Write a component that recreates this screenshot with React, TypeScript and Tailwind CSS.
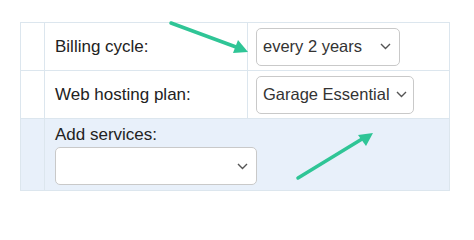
import React from "react";

function Chevron() {
  return (
    <svg width="11" height="7" viewBox="0 0 11 7" className="shrink-0">
      <path d="M1 1l4.5 4.5L10 1" fill="none" stroke="#555" strokeWidth="1.4" />
    </svg>
  );
}

function FakeSelect({ value, className }: { value: string; className: string }) {
  return (
    <div
      className={`flex items-center justify-between h-[38px] bg-white border border-[#c9c9c9] rounded-[5px] pl-[6px] pr-[8px] text-[16.5px] text-[#333] ${className}`}
    >
      <span className="whitespace-nowrap">{value}</span>
      <Chevron />
    </div>
  );
}

export default function App() {
  return (
    <div
      className="relative w-[474px] h-[223px] bg-white overflow-hidden"
      style={{ fontFamily: '"Liberation Sans", Arial, sans-serif' }}
    >
      <div className="pt-[22px] pl-[20px]">
        <table className="border-collapse w-[430px] border border-[#dce6ee] text-[17px] text-[#222]">
          <tbody>
            <tr className="h-[48px]">
              <td className="w-[24px] border border-[#dce6ee]"></td>
              <td className="w-[203px] border border-[#dce6ee] pl-[10px]">Billing cycle:</td>
              <td className="border border-[#dce6ee] pl-[8px]">
                <FakeSelect value="every 2 years" className="w-[144px]" />
              </td>
            </tr>
            <tr className="h-[48px]">
              <td className="border border-[#dce6ee]"></td>
              <td className="border border-[#dce6ee] pl-[10px]">Web hosting plan:</td>
              <td className="border border-[#dce6ee] pl-[8px]">
                <FakeSelect value="Garage Essential" className="w-[158px] !pr-[6px]" />
              </td>
            </tr>
            <tr className="h-[72px] bg-[#e8f0fa]">
              <td className="border border-[#dce6ee]"></td>
              <td colSpan={2} className="border border-[#dce6ee] pl-[10px] align-top pt-[6px]">
                <div className="leading-[20px]">Add services:</div>
                <div className="mt-[2px] mb-[5px]">
                  <FakeSelect value="" className="w-[202px] h-[38px]" />
                </div>
              </td>
            </tr>
          </tbody>
        </table>
      </div>

      <svg className="absolute inset-0 pointer-events-none" width="474" height="223" viewBox="0 0 474 223">
        <line x1="171" y1="23" x2="236" y2="47" stroke="#2fc596" strokeWidth="3.5" strokeLinecap="round" />
        <polygon points="248,52 233,53 238,40" fill="#2fc596" />
        <line x1="298" y1="178" x2="362" y2="139" stroke="#2fc596" strokeWidth="3.5" strokeLinecap="round" />
        <polygon points="373,133 366,146 358,135" fill="#2fc596" />
      </svg>
    </div>
  );
}
